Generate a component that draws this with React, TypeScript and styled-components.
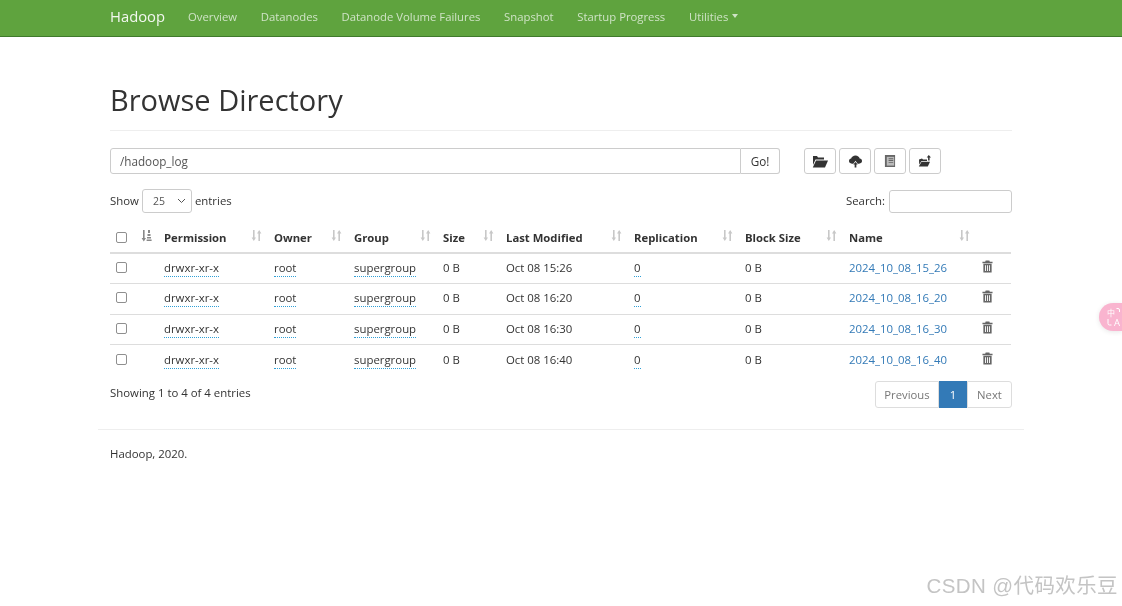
import React from "react";
import styled, { createGlobalStyle } from "styled-components";

const Global = createGlobalStyle`
  html, body { margin: 0; padding: 0; background: #fff; }
  body { font-family: "Open Sans", "Liberation Sans", sans-serif; font-size: 12px; color: #333; overflow: hidden; }
  * { box-sizing: border-box; }
`;

const Page = styled.div`position: relative; width: 1122px; height: 606px; overflow: hidden; filter: blur(0.35px);`;
const Navbar = styled.nav`
  height: 37px; background: #5fa33e; border-bottom: 1px solid #3f7a2c;
  padding-left: 110px; display: flex; align-items: center; padding-bottom: 4px;
`;
const Brand = styled.a`font-size: 14.8px; color: #f2f7ef; margin-right: 23px;`;
const NavLink = styled.a`font-size: 11.3px; color: #cfe3c6; margin-right: 23.7px; display: inline-flex; align-items: center; white-space: nowrap;`;
const Caret = styled.span`
  display: inline-block; margin-left: 4px; border-top: 4px solid #cfe3c6;
  border-left: 3px solid transparent; border-right: 3px solid transparent;
`;
const Container = styled.main`width: 926px; margin-left: 98px; padding: 0 12px;`;
const Header = styled.header`height: 94px; padding-top: 43px; border-bottom: 1px solid #eee;`;
const Title = styled.h1`margin: 0; font-size: 29px; line-height: 40px; font-weight: 400; color: #333;`;
const Toolbar = styled.div`display: flex; margin-top: 17px; height: 26px;`;
const PathInput = styled.div`
  width: 631px; border: 1px solid #ccc; border-radius: 3px 0 0 3px; padding-left: 9px; padding-bottom: 1px;
  display: flex; align-items: center; font-size: 11.7px; color: #555;
`;
const GoButton = styled.div`
  width: 39px; border: 1px solid #ccc; border-left: 0; border-radius: 0 3px 3px 0;
  display: flex; align-items: center; justify-content: center; font-size: 11.7px; color: #333; padding-bottom: 1px;
`;
const IconGroup = styled.div`display: flex; gap: 3px; margin-left: 24px;`;
const IconButton = styled.div`
  width: 32px; border: 1px solid #ccc; border-radius: 3px;
  display: flex; align-items: center; justify-content: center; color: #333;
`;
const Controls = styled.div`display: flex; justify-content: space-between; align-items: center; margin-top: 15px; height: 24px;`;
const ControlLabel = styled.div`display: flex; align-items: center; gap: 3px; font-size: 11.4px; color: #333; padding-bottom: 1px;`;
const SelectBox = styled.div`
  width: 50px; height: 24px; border: 1px solid #ccc; border-radius: 3px; padding-left: 10px;
  display: flex; align-items: center; justify-content: space-between; padding-right: 5px; font-size: 10.5px; color: #555;
`;
const SearchBox = styled.div`width: 123px; height: 23px; border: 1px solid #ccc; border-radius: 3px; margin-left: 1px; margin-top: 1px;`;
const Table = styled.table`width: 901px; table-layout: fixed; border-collapse: collapse; margin-top: 11px;`;
const HeadCell = styled.th`
  position: relative; height: 29px; padding: 0 7px 2px; text-align: left; font-size: 11.3px; font-weight: 700; color: #333;
  border-bottom: 2px solid #ddd; white-space: nowrap;
`;
const SortSlot = styled.span`position: absolute; right: 5px; top: 6px; color: #c8c8c8; display: flex;`;
const Row = styled.tr`height: 30.5px; & + & td { border-top: 1px solid #ddd; }`;
const Cell = styled.td`padding: 0 7px 2px; font-size: 11.4px; color: #333; white-space: nowrap;`;
const Dotted = styled.span`border-bottom: 1px dotted #2f9fd6; padding-bottom: 1px;`;
const FileLink = styled.a`color: #337ab7;`;
const Check = styled.span`
  display: block; width: 11px; height: 11px; border: 1px solid #8f8f8f; border-radius: 2px; margin-left: -1px; background: #fff;
`;
const TableFoot = styled.div`display: flex; justify-content: space-between; margin-top: 6px;`;
const Info = styled.div`font-size: 11.4px; color: #333; padding-top: 4px;`;
const Pager = styled.div`display: flex; height: 27px; font-size: 11.3px; color: #777;`;
const PageItem = styled.div<{ $w: number; $active?: boolean; $first?: boolean; $last?: boolean }>`
  width: ${p => p.$w}px; display: flex; align-items: center; justify-content: center;
  border: 1px solid ${p => (p.$active ? "#337ab7" : "#ddd")};
  background: ${p => (p.$active ? "#337ab7" : "#fff")};
  color: ${p => (p.$active ? "#fff" : "#777")};
  border-radius: ${p => (p.$first ? "3px 0 0 3px" : p.$last ? "0 3px 3px 0" : "0")};
`;
const FooterRule = styled.hr`width: 926px; margin: 21px 0 0 -12px; border: 0; border-top: 1px solid #eee;`;
const FooterText = styled.p`margin: 16px 0 0; font-size: 11.4px; color: #333;`;
const Floater = styled.div`
  position: absolute; right: 0; top: 303px; width: 23px; height: 28px; border-radius: 14px 0 0 14px;
  background: #f9b4cf; box-shadow: 0 1px 5px rgba(0,0,0,.1); display: flex; align-items: center; padding-left: 8px; overflow: hidden;
`;
const Watermark = styled.div`
  position: absolute; right: 4px; top: 572px; font-size: 20.5px; line-height: 28px; color: #c4c4c4;
  font-family: "Liberation Sans", "Noto Sans CJK SC", sans-serif; letter-spacing: .4px;
`;

const Sort = () => (
  <svg width="11" height="11" viewBox="0 0 11 11" fill="currentColor">
    <path d="M2 0h1.6v7.5H5L2.8 11 .6 7.5H2z" />
    <path d="M7.4 11h1.6V3.500h1.400L8.200 0 6 3.500h1.400z" />
  </svg>
);
const SortActive = () => (
  <svg width="11" height="12" viewBox="0 0 11 12" fill="#888">
    <path d="M2 0h1.6v8H5l-2.200 3.500L.6 8H2z" />
    <path d="M7 0h2v3H7zM6.500 4h3v2h-3zM6 7h4v1.500H6zM5.600 9.500h5V11h-5z" />
  </svg>
);
const Trash = () => (
  <svg width="11" height="13" viewBox="0 0 12 13" fill="#666" style={{ display: "block", marginTop: -2 }}>
    <path d="M4 0h4l.5 1.200H11.500V3H.5V1.200H3.500z" />
    <path fillRule="evenodd" d="M1.500 3.600h9V13h-9zM3.300 5v6.500h1V5zM5.500 5v6.500h1V5zM7.700 5v6.500h1V5z" />
  </svg>
);
const FolderOpen = () => (
  <svg width="16" height="13" viewBox="0 0 16 13" fill="#333">
    <path d="M1 1h4l1 1.500h6V4.500H3.500L1 10z" />
    <path d="M4 5.500h12L13 12.500H.8z" />
  </svg>
);
const CloudUp = () => (
  <svg width="13" height="13" viewBox="0 0 15 14" fill="#333">
    <path d="M3.500 9.500C1 9.500 0 8 0 6.500 0 5 1 3.800 2.500 3.600 3 1.500 5 0 7.500 0 10 0 11.800 1.500 12.300 3.600 14 3.800 15 5 15 6.500 15 8 14 9.500 11.500 9.500H10L7.500 6 5 9.500z" />
    <path d="M7.500 7.500 10 10.500H8.500V14h-2V10.500H5z" />
  </svg>
);
const Book = () => (
  <svg width="12" height="12" viewBox="0 0 13 13">
    <path fill="#666" d="M1 0h11v13H1z" />
    <path fill="#bbb" d="M3 2h8v9.500H3z" />
    <path fill="#666" d="M5 3.500h5v1H5zM5 5.500h5v1H5zM5 7.500h5v1H5z" />
  </svg>
);
const FolderUp = () => (
  <svg width="14" height="12" viewBox="0 0 14 12" fill="#333">
    <path d="M1 4.500 4 3.500l1 1h4V6H3.500L1.200 9.500z" />
    <path d="M3.500 6.800H12L9.800 11.500H.8z" />
    <path d="M10.800 0 13 2.500h-1.400V5.500h-1.500V2.500H8.700z" />
  </svg>
);
const Chevron = () => (
  <svg width="9" height="6" viewBox="0 0 9 6" fill="none" stroke="#555" strokeWidth="1"><path d="M1 1l3.500 3.500L8 1" /></svg>
);
const TranslateGlyph = () => (
  <svg width="15" height="20" viewBox="0 0 15 20" style={{ flex: "none" }}>
    <text x="0" y="9" fontSize="8" fill="#fff" fontFamily="'Noto Sans CJK SC', sans-serif">中</text>
    <text x="7" y="19" fontSize="9.500" fill="#fff" fontFamily="'Open Sans', sans-serif">A</text>
    <path d="M9.500 1.500h1.500a1.500 1.500 0 0 1 1.500 1.500v2M4.500 18H2.500a1.500 1.500 0 0 1-1.500-1.500V12" fill="none" stroke="#fff" strokeWidth="1" />
  </svg>
);

const cols = [47, 110, 80, 89, 63, 128, 111, 104, 133, 36];
const heads = ["Permission", "Owner", "Group", "Size", "Last Modified", "Replication", "Block Size", "Name"];
const rows = [
  ["Oct 08 15:26", "2024_10_08_15_26"],
  ["Oct 08 16:20", "2024_10_08_16_20"],
  ["Oct 08 16:30", "2024_10_08_16_30"],
  ["Oct 08 16:40", "2024_10_08_16_40"],
];

export default function App() {
  return (
    <Page>
      <Global />
      <Navbar>
        <Brand>Hadoop</Brand>
        <NavLink>Overview</NavLink>
        <NavLink>Datanodes</NavLink>
        <NavLink>Datanode Volume Failures</NavLink>
        <NavLink>Snapshot</NavLink>
        <NavLink>Startup Progress</NavLink>
        <NavLink>Utilities<Caret /></NavLink>
      </Navbar>
      <Container>
        <Header><Title>Browse Directory</Title></Header>
        <Toolbar>
          <PathInput>/hadoop_log</PathInput>
          <GoButton>Go!</GoButton>
          <IconGroup>
            <IconButton><FolderOpen /></IconButton>
            <IconButton><CloudUp /></IconButton>
            <IconButton><Book /></IconButton>
            <IconButton><FolderUp /></IconButton>
          </IconGroup>
        </Toolbar>
        <Controls>
          <ControlLabel>Show <SelectBox>25<Chevron /></SelectBox> entries</ControlLabel>
          <ControlLabel>Search: <SearchBox /></ControlLabel>
        </Controls>
        <Table>
          <colgroup>{cols.map((w, i) => <col key={i} width={w} />)}</colgroup>
          <thead>
            <tr>
              <HeadCell><Check /><SortSlot><SortActive /></SortSlot></HeadCell>
              {heads.map(h => <HeadCell key={h}>{h}<SortSlot><Sort /></SortSlot></HeadCell>)}
              <HeadCell />
            </tr>
          </thead>
          <tbody>
            {rows.map(([date, name]) => (
              <Row key={name}>
                <Cell><Check /></Cell>
                <Cell><Dotted>drwxr-xr-x</Dotted></Cell>
                <Cell><Dotted>root</Dotted></Cell>
                <Cell><Dotted>supergroup</Dotted></Cell>
                <Cell>0 B</Cell>
                <Cell>{date}</Cell>
                <Cell><Dotted>0</Dotted></Cell>
                <Cell>0 B</Cell>
                <Cell><FileLink>{name}</FileLink></Cell>
                <Cell><Trash /></Cell>
              </Row>
            ))}
          </tbody>
        </Table>
        <TableFoot>
          <Info>Showing 1 to 4 of 4 entries</Info>
          <Pager>
            <PageItem $w={64} $first>Previous</PageItem>
            <PageItem $w={28} $active>1</PageItem>
            <PageItem $w={45} $last>Next</PageItem>
          </Pager>
        </TableFoot>
        <FooterRule />
        <FooterText>Hadoop, 2020.</FooterText>
      </Container>
      <Floater><TranslateGlyph /></Floater>
      <Watermark>CSDN @代码欢乐豆</Watermark>
    </Page>
  );
}
